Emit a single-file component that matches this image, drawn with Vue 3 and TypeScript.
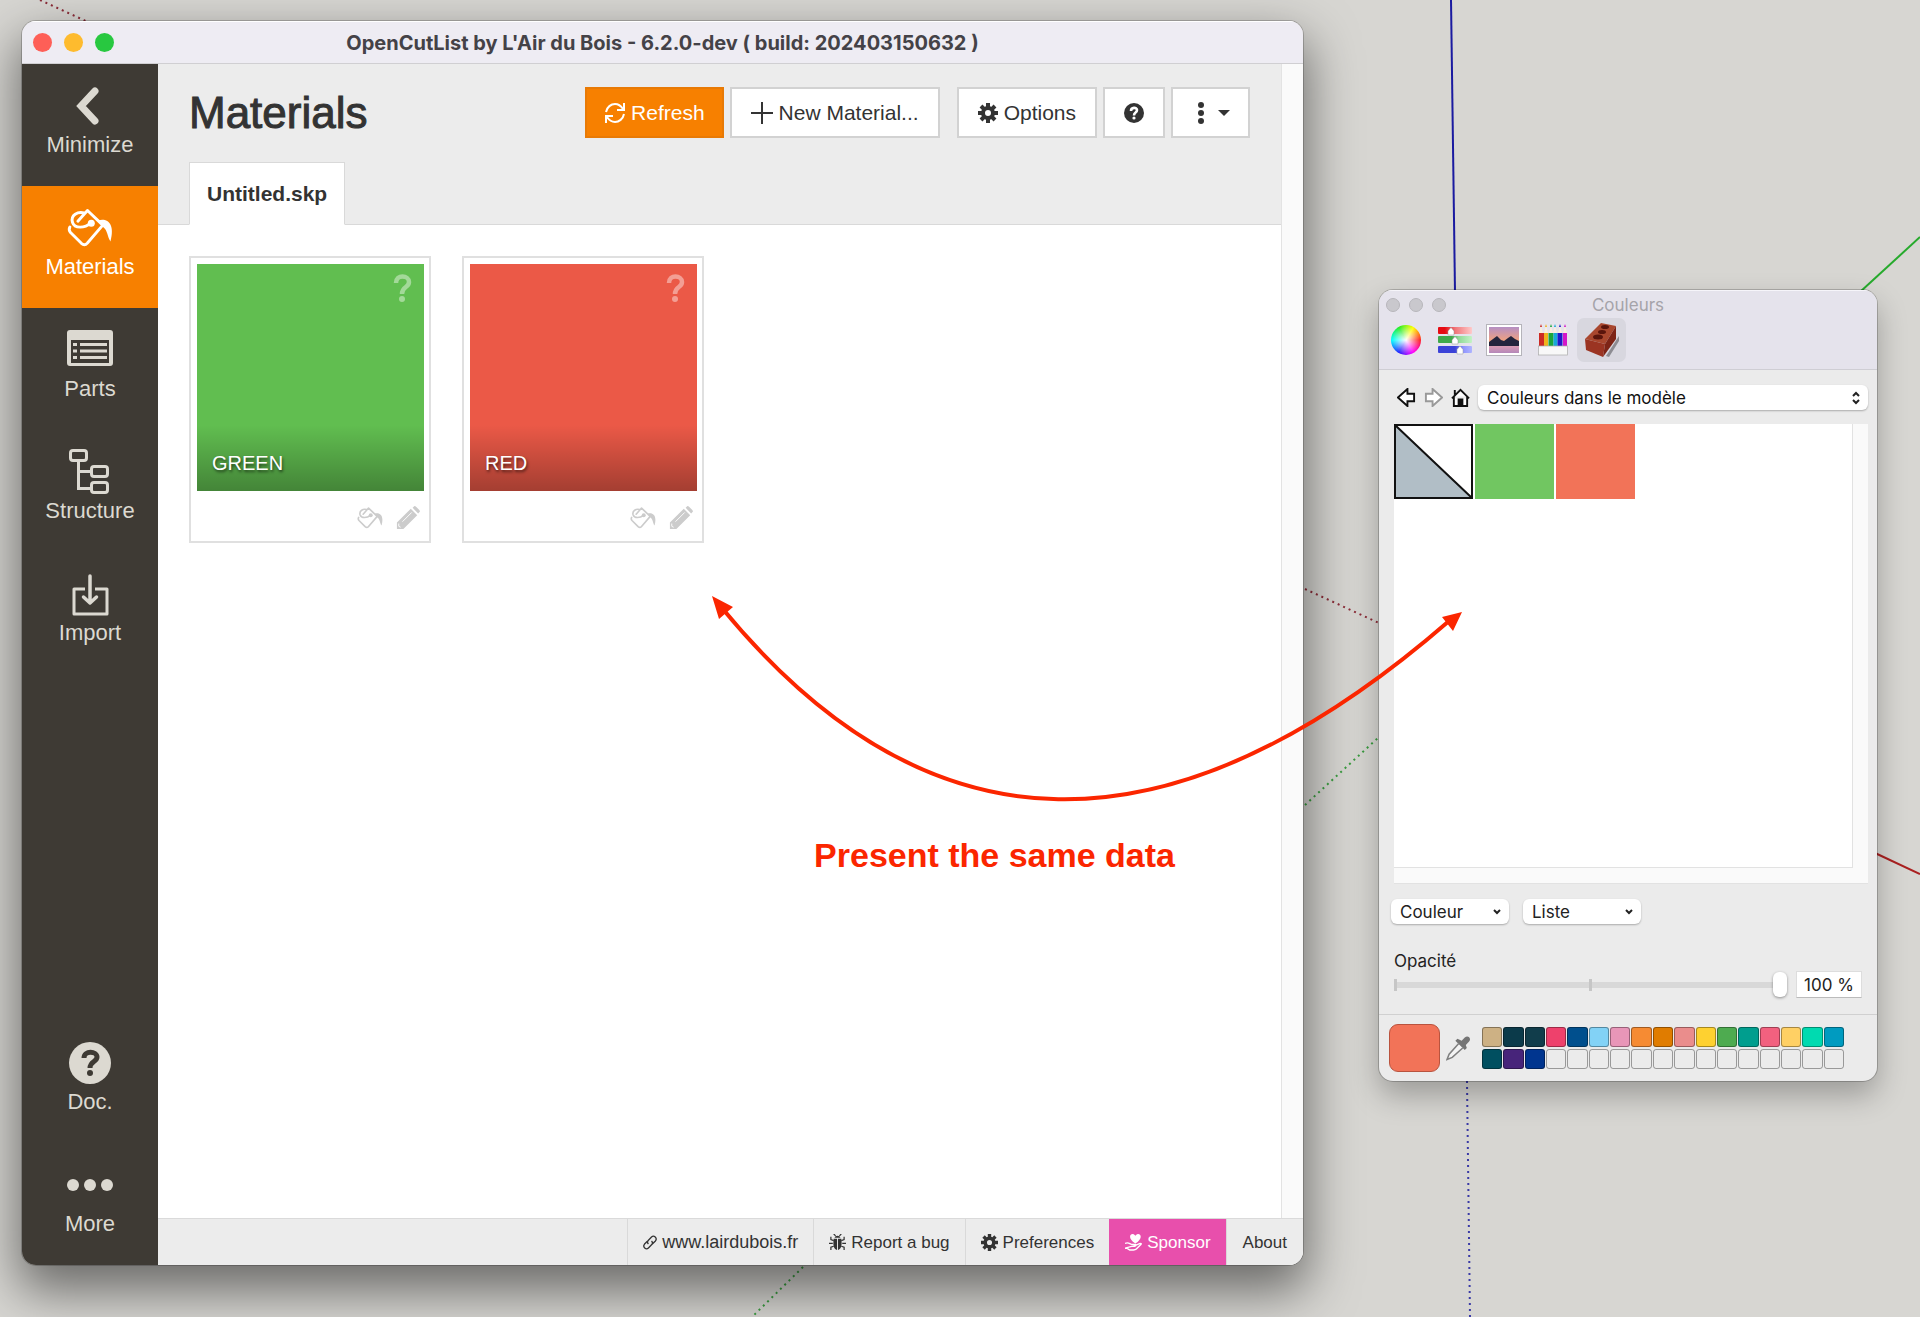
<script setup lang="ts">
import { ref } from 'vue'

interface NavItem { icon: string; label: string; active?: boolean }
interface Material { name: string; color: string }
interface FooterLink { icon?: string; label: string; kind: string }

const topNav: NavItem[] = [
  { icon: 'minimize', label: 'Minimize' },
  { icon: 'bucket', label: 'Materials', active: true },
  { icon: 'parts', label: 'Parts' },
  { icon: 'structure', label: 'Structure' },
  { icon: 'import', label: 'Import' },
]
const bottomNav: NavItem[] = [
  { icon: 'doc', label: 'Doc.' },
  { icon: 'more', label: 'More' },
]
const materials: Material[] = [
  { name: 'GREEN', color: '#61be50' },
  { name: 'RED', color: '#eb5947' },
]
const footerLinks: FooterLink[] = [
  { icon: 'link', label: 'www.lairdubois.fr', kind: 'site' },
  { icon: 'bug', label: 'Report a bug', kind: 'bug' },
  { icon: 'gear', label: 'Preferences', kind: 'prefs' },
  { icon: 'sponsor', label: 'Sponsor', kind: 'sponsor' },
  { label: 'About', kind: 'about' },
]
const pickerModes = ['wheel', 'sliders', 'photo', 'pencils', 'brick']
const modelColors = ['#71c661', '#f27358']
const saved = [
  '#cdb184', '#0b3a4a', '#113d4b', '#ee416c', '#004f8d', '#82d2f6', '#e896b8', '#f68b33', '#e07c00',
  '#ea8d8c', '#fed130', '#4eab50', '#009e8e', '#f2617f', '#ffd064', '#00dab0', '#009bc0',
  '#004f60', '#47247a', '#00358f',
]
const wells = Array.from({ length: 34 }, (_, i) => saved[i] ?? '')
const opacity = ref(100)
</script>

<template>
  <svg class="sprite" aria-hidden="true">
    <symbol id="i-minimize" viewBox="0 0 46 40"><path d="M28 5 14 20l14 15" fill="none" stroke="currentColor" stroke-width="7" stroke-linecap="round" /></symbol>
    <symbol id="i-bucket" viewBox="198 624 144 124">
      <g fill="none" stroke="currentColor" stroke-width="9" stroke-linecap="round" stroke-linejoin="round">
        <path d="M232 665 262 631 310 677 262 733Q253 743 243 734L209 700Q202 692 207 683" />
        <path d="M273 671C254 686 222 690 215 668C209 645 232 634 251 639" />
      </g>
      <circle cx="274" cy="671" r="11" fill="currentColor" />
      <path d="M296 662C326 654 349 674 334 728C324 714 326 694 311 683Z" fill="currentColor" />
    </symbol>
    <symbol id="i-parts" viewBox="0 0 46 40">
      <path fill="currentColor" fill-rule="evenodd" d="M3 0h40a3 3 0 0 1 3 3v30a3 3 0 0 1-3 3H3a3 3 0 0 1-3-3V3a3 3 0 0 1 3-3zM4 10v23h38V10z" />
      <path stroke="currentColor" stroke-width="3" d="M6 14.500h4m3 0h27M6 21h4m3 0h27M6 27.500h4m3 0h27" />
    </symbol>
    <symbol id="i-structure" viewBox="0 0 46 40">
      <g fill="none" stroke="currentColor" stroke-width="3">
        <rect x="3.500" y="-1.500" width="16" height="10" rx="2.500" /><rect x="24.500" y="14.500" width="16" height="10" rx="2.500" /><rect x="24.500" y="30.500" width="16" height="10" rx="2.500" />
        <path d="M11.500 9v27.500h13M11.500 19.500h13" />
      </g>
    </symbol>
    <symbol id="i-import" viewBox="0 0 46 40">
      <path fill="none" stroke="currentColor" stroke-width="3" stroke-linejoin="round" d="M18 15H7v25h33V15H28" />
      <path fill="none" stroke="currentColor" stroke-width="3.500" stroke-linecap="round" stroke-linejoin="round" d="M23 2v27m-6.500-6 6.500 6 6.500-6" />
    </symbol>
    <symbol id="i-doc" viewBox="0 0 46 40"><circle cx="23" cy="20" r="21" fill="currentColor" /><g class="cut"><path fill="none" stroke-width="5" d="M17 15c0-8 13-7 13-1 0 5-7 4-7 11" /><circle cx="23" cy="30" r="3" stroke="none" /></g></symbol>
    <symbol id="i-more" viewBox="0 0 46 40"><g fill="currentColor"><circle cx="6" cy="20" r="6" /><circle cx="23" cy="20" r="6" /><circle cx="40" cy="20" r="6" /></g></symbol>
    <symbol id="i-refresh" viewBox="0 0 22 22"><path fill="none" stroke="currentColor" stroke-width="2" d="M2 10C3 5 7 2 11 2c4 0 6 2 8 5M20 1v7h-7M20 12c-1 5-5 8-9 8-4 0-6-2-8-5M2 21v-7h7" /></symbol>
    <symbol id="i-plus" viewBox="0 0 22 22"><path stroke="currentColor" stroke-width="2" d="M11 0v22M0 11h22" /></symbol>
    <symbol id="i-gear" viewBox="0 0 20 20">
      <circle cx="10" cy="10" r="5" fill="none" stroke="currentColor" stroke-width="4" />
      <path stroke="currentColor" stroke-width="4" d="M10 0v5M10 15v5M0 10h5M15 10h5M3 3l3 3M14 14l3 3M3 17l3-3M14 6l3-3" />
    </symbol>
    <symbol id="i-help" viewBox="0 0 20 20"><circle cx="10" cy="10" r="10" fill="currentColor" /><path fill="none" stroke="#fff" stroke-width="2.600" d="M7 8c0-4 6-4 6-1 0 3-3 2-3 5.500" /><circle cx="10" cy="15" r="1.600" fill="#fff" /></symbol>
    <symbol id="i-dots" viewBox="0 0 6 22"><g fill="currentColor"><circle cx="3" cy="3" r="3" /><circle cx="3" cy="11" r="3" /><circle cx="3" cy="19" r="3" /></g></symbol>
    <symbol id="i-question" viewBox="0 0 20 28"><path fill="none" stroke="currentColor" stroke-width="4.500" d="M3 9C3 0 16 1 16 8c0 6-7 4-7 12" /><circle cx="9" cy="25" r="3" fill="currentColor" /></symbol>
    <symbol id="i-pencil" viewBox="0 0 26 26">
      <path fill="currentColor" d="M1 25V18L16 3l7 7L8 25zM18 2l2-2q1 0 2 1l3 3q1 1 1 2l-2 2z" />
      <path stroke="#fff" stroke-width="1" d="M7 17 17 7M3 19v3l2 1" fill="none" />
    </symbol>
    <symbol id="i-link" viewBox="0 0 18 18"><g fill="none" stroke="currentColor" stroke-width="1.700"><path d="M7 11C5 9 6 7 7 6l4-4c3-3 8 1 5 5l-4 4" /><path d="M11 7c2 2 1 4 0 5l-4 4c-3 3-8-1-5-5l4-4" /></g></symbol>
    <symbol id="i-bug" viewBox="0 0 18 18">
      <path fill="currentColor" d="M6 4c0-3 6-3 6 0zM5 5h3.500v12C5 16 4 12 5 5zM9.500 5H13c1 7 0 11-3.500 12z" />
      <path fill="none" stroke="currentColor" d="M5 0l2 2M13 0l-2 2M5 7 2 6V3M13 7l3-1V3M4 10H0M14 10h4M5 13l-3 1v3M13 13l3 1v3" stroke-width="1.300" />
    </symbol>
    <symbol id="i-sponsor" viewBox="0 0 18 18">
      <path fill="currentColor" d="M11 10C3 5 5 0 8 0c2 0 3 2 3 2s1-2 3-2c3 0 5 5-3 10z" />
      <path fill="none" stroke="currentColor" stroke-width="1.500" d="M0 10c4-2 5 1 7 1h4c1 0 1 2-1 2H7M11 12l5-2c2 0 1 1 0 2l-4 4q-1 1-3 1H5l-3-2H0z" />
    </symbol>
    <symbol id="i-caret" viewBox="0 0 12 6"><path fill="currentColor" d="M0 0h12L6 6z" /></symbol>
    <symbol id="i-sliders" viewBox="0 0 34 28">
      <defs>
        <linearGradient id="g-r"><stop offset=".2" stop-color="#e60b12" /><stop offset=".5" stop-color="#f07478" /><stop offset="1" stop-color="#ffc9c9" /></linearGradient>
        <linearGradient id="g-g"><stop offset=".4" stop-color="#3fa94b" /><stop offset=".6" stop-color="#8fd996" /><stop offset="1" stop-color="#c4f3c6" /></linearGradient>
        <linearGradient id="g-b"><stop offset=".5" stop-color="#3b42d8" /><stop offset=".75" stop-color="#9095ff" /><stop offset="1" stop-color="#b0b5ff" /></linearGradient>
      </defs>
      <rect y="1" width="34" height="7" rx="1" fill="url(#g-r)" /><rect y="10" width="34" height="7" rx="1" fill="url(#g-g)" /><rect y="20" width="34" height="7" rx="1" fill="url(#g-b)" />
      <path fill="#fff" stroke="#999" stroke-width=".5" d="M13 1.500l3 3.500v4h-6V5zM17 10.500l3 3.500v4h-6v-4zM22 20l3 3.500V28h-6v-4.500z" />
    </symbol>
    <symbol id="i-photo" viewBox="0 0 36 32">
      <defs>
        <linearGradient id="g-sky" x2="0" y2="1"><stop stop-color="#b58fc4" /><stop offset="1" stop-color="#ffa66f" /></linearGradient>
        <linearGradient id="g-sea" x2="0" y2="1"><stop stop-color="#e6a3b0" /><stop offset="1" stop-color="#b487ba" /></linearGradient>
      </defs>
      <rect x=".5" y=".5" width="35" height="31" fill="#fff" stroke="#b5b4ba" />
      <rect x="3" y="3" width="30" height="17" fill="url(#g-sky)" /><rect x="3" y="20" width="30" height="9" fill="url(#g-sea)" />
      <path fill="#24243c" d="M3 18l4-3 4-3 4 4 3 1 4-3 3-2 4 3 4 2v5H3z" />
    </symbol>
    <symbol id="i-pencils" viewBox="0 0 30 32">
      <path fill="#fbeedd" d="M1 9 3 2l2 7zM6 9l2-7 2 7zM11 9l2-7 2 7zM15 9l2-7 2 7zM20 9l2-7 2 7zM25 9l2-7 2 7z" />
      <path fill="#cc2a24" d="M1 9h5v13H1zM2 3l1-3 1 3z" /><path fill="#f0b21c" d="M6 9h4v13H6zM7 3l1-3 1 3z" /><path fill="#1ba53a" d="M10.500 9h5v13h-5zM12 3l1-3 1 3z" />
      <path fill="#17a9d8" d="M15.500 9h4v13h-4zM16 3l1-3 1 3z" /><path fill="#2118c8" d="M19.500 9h5v13h-5zM21 3l1-3 1 3z" /><path fill="#d417c8" d="M25 9h4v13h-4zM26 3l1-3 1 3z" />
      <rect x=".5" y="22" width="29" height="9" fill="#f8f8f8" stroke="#aaa" stroke-width=".7" />
    </symbol>
    <symbol id="i-brick" viewBox="0 0 36 36">
      <path fill="#8d8c92" d="M22 34 35 14v5L25 35z" />
      <path fill="#a9472e" d="M1 17 17 1l15 3-11 18z" /><path fill="#9b3422" d="M1 17l20 5-2 13L2 28z" /><path fill="#7e2416" d="M21 22 32 4v13L19 35z" />
      <g fill="#5a150c"><ellipse cx="21" cy="5" rx="4" ry="2" /><ellipse cx="18" cy="10" rx="4" ry="2" /><ellipse cx="14" cy="15" rx="5" ry="2.500" /></g>
    </symbol>
    <symbol id="i-back" viewBox="0 0 20 20"><path fill="#fff" stroke="currentColor" stroke-width="2" d="M1 10 11 1v5h7v8h-7v5z" /></symbol>
    <symbol id="i-home" viewBox="0 0 20 20"><path fill="#fff" stroke="currentColor" stroke-width="2" d="M3 9v10h14V9M1 11 10 2l9 9M4 7V2" /><path fill="currentColor" d="M7 11h6v8H7z" /></symbol>
    <symbol id="i-dropper" viewBox="0 0 24 24">
      <path fill="#f4f4f4" stroke="#808080" stroke-width="1.500" d="M12 8 3 18l-2 5 5-2L16 12" />
      <path fill="#757575" d="M15 5l3-3c3-3 7 1 4 4l-3 3 1 3-2 2-9-9 2-2z" />
    </symbol>
  </svg>

  <main class="desktop">
    <svg class="axes" viewBox="0 0 1920 1317" preserveAspectRatio="none" aria-hidden="true">
      <g fill="none" stroke-width="2">
        <path stroke="#1a1aa0" d="M1451 0l4 292" />
        <path stroke="#26aa2c" d="M1920 237l-60 55" />
        <path stroke="#aa2020" d="M1875 853l45 21" />
        <path stroke="#3a3aa6" stroke-dasharray="2 4" d="M1467 1081l3 236" />
        <path stroke="#8c2c38" stroke-dasharray="2 4" d="M40 0l48 22M1305 589l74 34" />
        <path stroke="#3a9c40" stroke-dasharray="2 4" d="M1305 805l74-68M803 1267l-51 50" />
      </g>
    </svg>

    <section class="window app">
      <header class="titlebar">
        <div class="lights"><i class="red"></i><i class="amber"></i><i class="green"></i></div>
        <h2>OpenCutList by L'Air du Bois - 6.2.0-dev ( build: 202403150632 )</h2>
      </header>
      <div class="app-body">
        <nav class="sidebar">
          <a v-for="n in topNav" :key="n.label" href="#" :class="{ active: n.active }">
            <svg><use :href="'#i-' + n.icon" /></svg><span>{{ n.label }}</span>
          </a>
          <div class="spacer"></div>
          <a v-for="n in bottomNav" :key="n.label" href="#">
            <svg><use :href="'#i-' + n.icon" /></svg><span>{{ n.label }}</span>
          </a>
        </nav>
        <div class="main">
          <div class="scroller">
            <div class="page">
              <div class="page-head">
                <div class="head-row">
                  <h1>Materials</h1>
                  <div class="tools">
                    <button class="btn primary"><svg class="w22"><use href="#i-refresh" /></svg>Refresh</button>
                    <button class="btn"><svg class="w22"><use href="#i-plus" /></svg>New Material...</button>
                    <button class="btn apart"><svg class="w20"><use href="#i-gear" /></svg>Options</button>
                    <button class="btn" aria-label="Help"><svg class="w20"><use href="#i-help" /></svg></button>
                    <button class="btn menu" aria-label="More actions"><svg class="dots"><use href="#i-dots" /></svg><svg class="caret"><use href="#i-caret" /></svg></button>
                  </div>
                </div>
                <div class="tabs" role="tablist"><button role="tab" aria-selected="true">Untitled.skp</button></div>
              </div>
              <div class="cards">
                <article v-for="m in materials" :key="m.name" class="card">
                  <div class="thumb" :style="{ backgroundColor: m.color }">
                    <svg class="unknown"><use href="#i-question" /></svg>
                    <div class="name">{{ m.name }}</div>
                  </div>
                  <div class="card-foot">
                    <button :aria-label="'Paint with ' + m.name"><svg><use href="#i-bucket" /></svg></button>
                    <button :aria-label="'Edit ' + m.name"><svg><use href="#i-pencil" /></svg></button>
                  </div>
                </article>
              </div>
            </div>
            <div class="gutter"></div>
          </div>
          <footer class="links">
            <a v-for="l in footerLinks" :key="l.kind" href="#" :class="l.kind">
              <svg v-if="l.icon"><use :href="'#i-' + l.icon" /></svg>{{ l.label }}
            </a>
          </footer>
        </div>
      </div>
    </section>

    <section class="window palette">
      <header class="pal-head">
        <div class="pal-title">
          <div class="lights"><i></i><i></i><i></i></div>
          <h2>Couleurs</h2>
        </div>
        <div class="modes">
          <button v-for="p in pickerModes" :key="p" :class="p" :aria-label="p">
            <span v-if="p === 'wheel'" class="disc"></span>
            <svg v-else><use :href="'#i-' + p" /></svg>
          </button>
        </div>
      </header>
      <div class="pal-body">
        <div class="browse">
          <button aria-label="Back"><svg><use href="#i-back" /></svg></button>
          <button aria-label="Forward" class="forward"><svg><use href="#i-back" /></svg></button>
          <button aria-label="Home"><svg><use href="#i-home" /></svg></button>
          <div class="pop library">
            <select aria-label="Library"><option>Couleurs dans le modèle</option></select>
            <svg viewBox="0 0 8 14"><path d="M1 5l3-3 3 3M1 9l3 3 3-3" /></svg>
          </div>
        </div>
        <div class="list">
          <div class="list-view">
            <svg class="chip" viewBox="0 0 79 75" preserveAspectRatio="none">
              <rect x="1" y="1" width="77" height="73" fill="#fff" /><path d="M1 1v73h77z" fill="#b1bec6" />
              <path d="M1 1v73h77V1zl77 73" fill="none" stroke="#111" stroke-width="2" />
            </svg>
            <div v-for="c in modelColors" :key="c" class="chip" :style="{ backgroundColor: c }"></div>
          </div>
        </div>
        <div class="pops">
          <div class="pop"><select aria-label="Type"><option>Couleur</option></select><svg viewBox="0 0 8 6"><path d="M1 1l3 3 3-3" /></svg></div>
          <div class="pop"><select aria-label="Affichage"><option>Liste</option></select><svg viewBox="0 0 8 6"><path d="M1 1l3 3 3-3" /></svg></div>
        </div>
        <label for="opacity">Opacité</label>
        <div class="slider-row">
          <input id="opacity" v-model.number="opacity" type="range" min="0" max="100" />
          <input class="value" type="text" aria-label="Opacité en pourcentage" :value="opacity + ' %'" />
        </div>
      </div>
      <footer class="pal-foot">
        <div class="current"></div>
        <button aria-label="Pipette"><svg><use href="#i-dropper" /></svg></button>
        <div class="wells"><i v-for="(w, i) in wells" :key="i" :style="w ? { backgroundColor: w } : undefined"></i></div>
      </footer>
    </section>

    <svg class="arrow" viewBox="0 0 1920 1317" preserveAspectRatio="none" aria-hidden="true">
      <path fill="none" stroke="#fb2600" stroke-width="4" d="M722 608Q1031 984 1449 621" />
      <path fill="#fb2600" d="M712 596l21 11-14 12zM1462 612l-20 5 11 14z" />
    </svg>
    <p class="caption">Present the same data</p>
  </main>
</template>

<style>
body { margin: 0; }
</style>

<style scoped>
* { box-sizing: border-box; }
h1, h2, p { margin: 0; }
button, input, select { font: inherit; color: inherit; margin: 0; }
button { border: 0; padding: 0; background: none; cursor: pointer; }
a { color: inherit; text-decoration: none; }
svg { display: block; }
symbol { overflow: visible; }
.sprite { position: absolute; width: 0; height: 0; }
.desktop {
  position: relative; display: flex; align-items: flex-start; gap: 76px;
  min-height: 100vh; padding: 21px 43px 52px 22px; overflow: hidden;
  background: #d7d6d2; font-family: "Liberation Sans", Arial, sans-serif; color: #333;
}
.axes, .arrow { position: absolute; inset: 0; width: 100%; height: 100%; pointer-events: none; }
.window { position: relative; border-radius: 14px; overflow: hidden; }
.app {
  flex: 1; min-width: 0; display: flex; flex-direction: column; min-height: calc(100vh - 73px);
  box-shadow: 0 0 0 1px rgba(0, 0, 0, .2), 0 22px 50px 4px rgba(0, 0, 0, .5);
}
.titlebar { display: flex; align-items: center; height: 43px; padding: 0 11px; background: #eeecf3; border-top: 1px solid #fff; border-bottom: 1px solid #d0cfd2; }
.lights { display: flex; gap: 12px; width: 0; }
.lights i { flex: none; width: 19px; height: 19px; border-radius: 50%; }
.red { background: #fe5f57; }
.amber { background: #febb2e; }
.green { background: #28c840; }
.titlebar h2 { flex: 1; text-align: center; font: 700 20px/24px Inter, sans-serif; color: #444247; }
.app-body { flex: 1; display: flex; }
.sidebar { display: flex; flex-direction: column; width: 136px; background: #3e3a34; color: #dcd9d1; }
.sidebar a { display: flex; flex-direction: column; align-items: center; gap: 7px; height: 122px; padding-top: 22px; font-size: 22px; line-height: 24px; }
.sidebar a.active { background: #f78000; color: #fff; }
.sidebar svg { width: 46px; height: 40px; overflow: visible; }
.spacer { flex: 1; }
.cut { stroke: #3e3a34; fill: #3e3a34; }
.main { flex: 1; min-width: 0; display: flex; flex-direction: column; background: #fff; }
.scroller { flex: 1; display: flex; }
.page { flex: 1; min-width: 0; }
.gutter { width: 22px; background: #fafafa; border-left: 1px solid #e3e3e3; }
.page-head { padding: 23px 31px 0; background: #ececec; border-bottom: 1px solid #d9d9d9; }
.head-row { display: flex; justify-content: space-between; align-items: center; height: 51px; }
h1 { font-size: 44px; line-height: 48px; font-weight: 400; -webkit-text-stroke: 1px #333; }
.tools { display: flex; gap: 6px; }
.btn { display: flex; align-items: center; gap: 6px; height: 51px; padding: 0 19px; border: 2px solid #d2d2d2; background: #fff; font-size: 21px; line-height: 24px; }
.btn.primary { background: #f78000; border-color: #e87a05; color: #fff; gap: 5px; padding: 0 17px; }
.btn.apart { margin-left: 11px; }
.btn.menu { gap: 14px; padding: 0 18px 0 25px; }
.w22 { width: 22px; height: 22px; }
.w20 { width: 20px; height: 20px; }
.dots { width: 6px; height: 22px; }
.caret { width: 12px; height: 6px; }
.tabs { display: flex; padding-top: 24px; margin-bottom: -1px; }
.tabs button { height: 63px; padding: 0 17px; border: 1px solid #d9d9d9; border-bottom-color: #fff; background: #fff; font-size: 21px; font-weight: 700; }
.cards { display: flex; flex-wrap: wrap; gap: 31px; padding: 31px; }
.card { width: 242px; padding: 6px 5px 0 6px; border: 2px solid #e0e0e0; }
.thumb { display: flex; flex-direction: column; justify-content: space-between; height: 227px; }
.unknown { align-self: flex-end; width: 20px; height: 28px; margin: 10px 11px 0; color: rgba(255, 255, 255, .42); }
.name { padding: 26px 15px 16px; font-size: 20px; line-height: 24px; color: #fff; text-shadow: 1px 2px 3px rgba(0, 0, 0, .6); background: linear-gradient(transparent, rgba(0, 0, 0, .3)); }
.card-foot { display: flex; justify-content: flex-end; align-items: center; gap: 12px; height: 50px; padding: 4px 3px 0; color: #ccc; }
.card-foot svg { width: 26px; height: 24px; }
.links { display: flex; justify-content: flex-end; height: 47px; background: #ececec; border-top: 1px solid #dadada; font-size: 17px; }
.links a { display: flex; align-items: center; justify-content: center; gap: 5px; padding: 1px 15px 0; border-left: 1px solid #d9d9d9; }
.links svg { width: 17px; height: 17px; }
.links .site { width: 186px; font-size: 18px; }
.links .sponsor { background: #e84fac; border-color: #e84fac; color: #fff; }
.links .about { padding: 1px 16px 0; }

.palette {
  width: 498px; margin-top: 269px; background: #ebebeb; color: #222; font-family: Inter, sans-serif; font-size: 17px;
  box-shadow: 0 0 0 1px rgba(0, 0, 0, .2), 0 14px 30px rgba(0, 0, 0, .28);
}
.pal-head { height: 80px; background: #e5e3ec; border-top: 1px solid #f6f5fa; border-bottom: 1px solid #cfced4; }
.pal-title { display: flex; align-items: center; height: 27px; padding: 0 7px; }
.pal-title .lights { gap: 9px; }
.pal-title .lights i { width: 14px; height: 14px; background: #c9c8cd; border: 1px solid #b7b6bb; }
.pal-title h2 { flex: 1; text-align: center; font-size: 17px; line-height: 20px; font-weight: 400; color: #a5a4aa; }
.modes { display: flex; padding-left: 2px; }
.modes button { display: flex; align-items: center; justify-content: center; width: 49px; height: 44px; border-radius: 7px; }
.modes .brick { background: #d8d7df; }
.modes svg { width: 36px; height: 32px; }
.modes .sliders svg { width: 34px; }
.modes .pencils svg { width: 30px; }
.modes .brick svg { height: 36px; }
.disc { width: 30px; height: 30px; border-radius: 50%; background: radial-gradient(#fff, transparent 68%), conic-gradient(from 90deg, #f22, #f0f, #22f, #0ff, #2e2, #ff0, #f22); }
.pal-body { padding: 15px 9px 0 15px; }
.browse { display: flex; align-items: center; gap: 8px; height: 25px; padding-left: 3px; color: #111; }
.browse button svg { width: 19px; height: 19px; }
.browse .forward { color: #999; transform: scaleX(-1); }
.pop { position: relative; width: 118px; }
.pop select { display: block; width: 100%; height: 25px; padding: 0 9px; border: 0; border-radius: 6px; appearance: none; background: #fff; box-shadow: 0 1px 2px rgba(0, 0, 0, .28); }
.pop svg { position: absolute; right: 8px; top: 10px; width: 8px; height: 6px; fill: none; stroke: #222; stroke-width: 2; pointer-events: none; }
.library { flex: 1; }
.library svg { top: 6px; height: 14px; }
.list { height: 460px; margin-top: 14px; padding: 0 15px 15px 0; background: #fafafa; border-bottom: 1px solid #e2e2e2; }
.list-view { display: flex; gap: 2px; height: 100%; background: #fff; border-right: 1px solid #e2e2e2; border-bottom: 1px solid #e2e2e2; }
.chip { width: 79px; height: 75px; }
.pops { display: flex; gap: 14px; margin: 15px 0 0 -3px; }
label { display: block; margin-top: 27px; line-height: 20px; }
.slider-row { display: flex; align-items: center; gap: 9px; height: 27px; }
.slider-row [type=range] {
  appearance: none; width: 393px; height: 27px; border-radius: 0;
  background: linear-gradient(#c6c6c6, #c6c6c6) 0 50% / 3px 12px no-repeat, linear-gradient(#c6c6c6, #c6c6c6) 50% 50% / 3px 12px no-repeat, linear-gradient(#d8d8d8, #d8d8d8) 0 50% / 100% 6px no-repeat;
}
.slider-row [type=range]::-webkit-slider-thumb { appearance: none; width: 14px; height: 25px; border-radius: 6px; background: #fff; box-shadow: 0 1px 3px rgba(0, 0, 0, .4); }
.value { width: 66px; height: 27px; padding: 0; text-align: center; border: 1px solid #ddd; border-bottom-color: #bbb; background: #fff; }
.pal-foot { display: flex; align-items: center; height: 67px; margin-top: 16px; padding: 0 33px 0 10px; border-top: 1px solid #d0d0d0; }
.current { width: 51px; height: 48px; border-radius: 9px; background: #f27358; border: 1px solid #b9533e; }
.pal-foot button { margin: 0 11px 0 6px; }
.pal-foot button svg { width: 25px; height: 26px; }
.wells { flex: 1; display: grid; grid-template-columns: repeat(17, 1fr); gap: 2px 1px; }
.wells i { height: 20px; border: 1px solid #aaa; border-color: rgba(0, 0, 0, .35); border-radius: 3px; }
.caption { position: absolute; left: 42.4%; top: 835px; font-size: 34px; line-height: 40px; font-weight: 700; color: #fb2600; }
</style>
